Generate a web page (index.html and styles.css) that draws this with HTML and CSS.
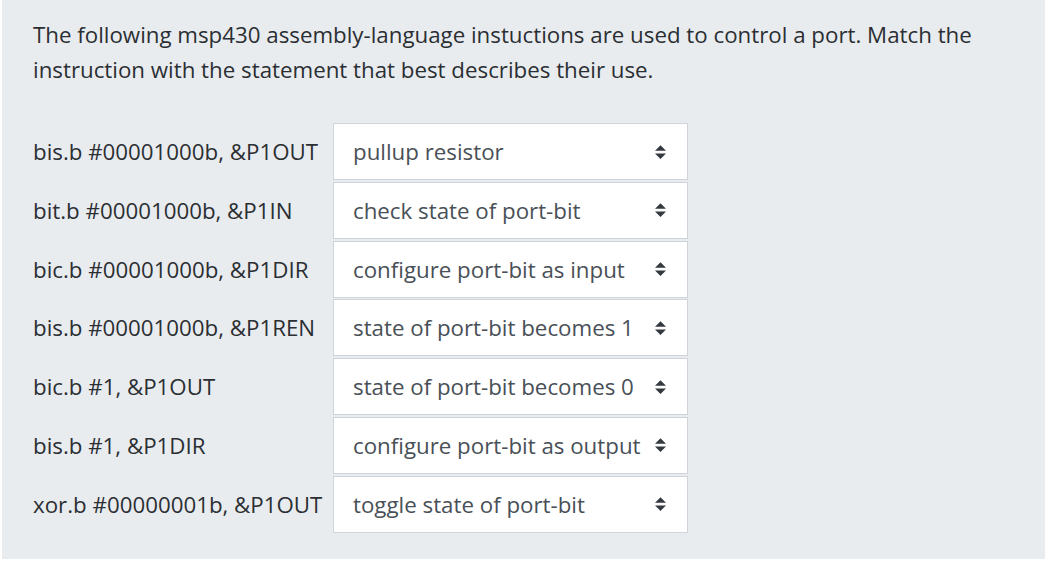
FILE: index.html
```html
<!DOCTYPE html>
<html>
<head>
<meta charset="utf-8">
<link rel="stylesheet" href="styles.css">
</head>
<body>
<div class="panel">
  <p class="prompt">The following msp430 assembly-language instuctions are used to control a port. Match the instruction with the statement that best describes their use.</p>
  <div class="rows">
    <div class="label">bis.b #00001000b, &amp;P1OUT</div>
    <div class="select"><span>pullup resistor</span><svg class="arrows" viewBox="0 0 4 5" width="11" height="14"><path d="M2 0L0 2h4zm0 5L0 3h4z" fill="#343a40"/></svg></div>
    <div class="label">bit.b #00001000b, &amp;P1IN</div>
    <div class="select"><span>check state of port-bit</span><svg class="arrows" viewBox="0 0 4 5" width="11" height="14"><path d="M2 0L0 2h4zm0 5L0 3h4z" fill="#343a40"/></svg></div>
    <div class="label">bic.b #00001000b, &amp;P1DIR</div>
    <div class="select"><span>configure port-bit as input</span><svg class="arrows" viewBox="0 0 4 5" width="11" height="14"><path d="M2 0L0 2h4zm0 5L0 3h4z" fill="#343a40"/></svg></div>
    <div class="label">bis.b #00001000b, &amp;P1REN</div>
    <div class="select"><span>state of port-bit becomes 1</span><svg class="arrows" viewBox="0 0 4 5" width="11" height="14"><path d="M2 0L0 2h4zm0 5L0 3h4z" fill="#343a40"/></svg></div>
    <div class="label">bic.b #1, &amp;P1OUT</div>
    <div class="select"><span>state of port-bit becomes 0</span><svg class="arrows" viewBox="0 0 4 5" width="11" height="14"><path d="M2 0L0 2h4zm0 5L0 3h4z" fill="#343a40"/></svg></div>
    <div class="label">bis.b #1, &amp;P1DIR</div>
    <div class="select"><span>configure port-bit as output</span><svg class="arrows" viewBox="0 0 4 5" width="11" height="14"><path d="M2 0L0 2h4zm0 5L0 3h4z" fill="#343a40"/></svg></div>
    <div class="label">xor.b #00000001b, &amp;P1OUT</div>
    <div class="select"><span>toggle state of port-bit</span><svg class="arrows" viewBox="0 0 4 5" width="11" height="14"><path d="M2 0L0 2h4zm0 5L0 3h4z" fill="#343a40"/></svg></div>
  </div>
</div>
</body>
</html>
```
FILE: styles.css
```css
html, body {
  margin: 0;
  padding: 0;
  background: #ffffff;
}
body {
  font-family: "Open Sans", "Noto Sans", sans-serif;
  font-size: 22.3px;
  color: #2b2f33;
}
.panel {
  margin-left: 2px;
  height: 559px;
  background: #e9ecef;
  padding: 17px 20px 0 31px;
  box-sizing: border-box;
}
.prompt {
  margin: 0;
  line-height: 35px;
  max-width: 990px;
}
.rows {
  margin-top: 36px;
  display: grid;
  grid-template-columns: 300px 355px;
  grid-auto-rows: 57px;
  row-gap: 1.8px;
  align-items: center;
}
.label {
  white-space: nowrap;
}
.select {
  height: 57px;
  box-sizing: border-box;
  background: #ffffff;
  border: 1px solid #ced4da;
  display: flex;
  align-items: center;
  padding: 0 21px 0 19px;
  color: #495057;
  white-space: nowrap;
}
.arrows {
  margin-left: auto;
  flex: none;
}
```
